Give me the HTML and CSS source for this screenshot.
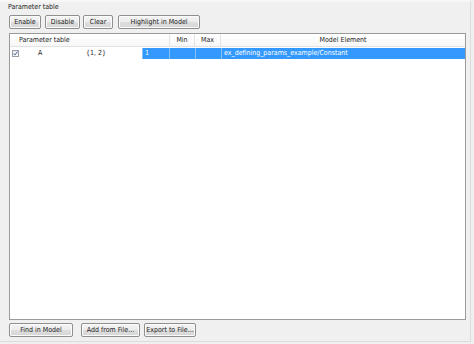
FILE: index.html
```html
<!DOCTYPE html>
<html>
<head>
<meta charset="utf-8">
<link rel="stylesheet" href="styles.css">
</head>
<body>
<div class="panel">
  <div class="title">Parameter table</div>
  <div class="toolbar">
    <button class="btn w-enable">Enable</button>
    <button class="btn w-disable">Disable</button>
    <button class="btn w-clear">Clear</button>
    <button class="btn w-highlight">Highlight in Model</button>
  </div>
  <div class="table">
    <div class="head">
      <div class="hcell h-param">Parameter table</div>
      <div class="hcell h-num">Min</div>
      <div class="hcell h-num">Max</div>
      <div class="hcell h-model">Model Element</div>
    </div>
    <div class="row">
      <div class="cell c-check"><span class="checkbox"><svg width="7" height="7" viewBox="0 0 7 7"><path d="M1.4 3.6 L2.8 5.1 L5.6 1.6" fill="none" stroke="#4a5a8a" stroke-width="1"/></svg></span></div>
      <div class="cell c-name">A</div>
      <div class="cell c-dim">{1, 2}</div>
      <div class="cell c-val sel">1</div>
      <div class="cell c-num sel"></div>
      <div class="cell c-num sel"></div>
      <div class="cell c-model sel">ex_defining_params_example/Constant</div>
    </div>
  </div>
  <div class="footer">
    <button class="btn w-find">Find in Model</button>
    <button class="btn w-add">Add from File...</button>
    <button class="btn w-export">Export to File...</button>
  </div>
</div>
</body>
</html>
```

FILE: styles.css
```css
html, body {
  margin: 0;
  padding: 0;
}
body {
  width: 474px;
  height: 344px;
  background: #f0f0f0;
  font-family: "DejaVu Sans Condensed", "DejaVu Sans", sans-serif;
  font-size: 7px;
  color: #222222;
  overflow: hidden;
}
.panel {
  box-sizing: border-box;
  width: 471px;
  height: 342px;
  border-top: 2px solid #f8f8f8;
  border-right: 1px solid #dcdcdc;
  border-bottom: 1px solid #dcdcdc;
  padding: 1px 0 0 9px;
  display: flex;
  flex-direction: column;
}
.title {
  height: 9px;
  line-height: 9px;
  margin-left: -1px;
}
.toolbar, .footer {
  display: flex;
  gap: 4px;
  margin-top: 3px;
}
.btn {
  box-sizing: border-box;
  height: 14px;
  padding: 0;
  margin: 0;
  font-family: inherit;
  font-size: 7px;
  color: #222222;
  border: 1px solid #8e8f8f;
  border-radius: 2px;
  background: linear-gradient(#f4f4f4 0%, #ececec 48%, #dedede 52%, #d6d6d6 100%);
  box-shadow: inset 0 0 0 1px #fcfcfc;
  line-height: 12px;
  text-align: center;
}
.w-enable { width: 32px; }
.w-disable { width: 35px; }
.w-clear { width: 30px; margin-left: -1px; }
.w-highlight { width: 82px; margin-left: 1px; }
.w-find { width: 64px; }
.w-add { width: 59px; margin-left: 4px; }
.w-export { width: 52px; }

.table {
  box-sizing: border-box;
  margin-top: 4px;
  width: 457px;
  height: 287px;
  border: 1px solid #9a9a9a;
  background: #ffffff;
}
.head {
  display: grid;
  grid-template-columns: 160px 25px 26px 1fr;
  height: 12px;
  border-bottom: 1px solid #e2e2e2;
  background: linear-gradient(#ffffff, #f7f7f7);
}
.hcell {
  line-height: 12px;
  border-right: 1px solid #e4e4e4;
  white-space: nowrap;
}
.h-param { padding-left: 9px; }
.h-num { text-align: center; }
.h-model { text-align: center; border-right: none; }

.row {
  display: grid;
  grid-template-columns: 20px 55px 57px 27px 26px 26px 1fr;
  height: 11px;
  margin-top: 1px;
}
.cell {
  line-height: 11px;
  white-space: nowrap;
  overflow: hidden;
}
.c-check {
  display: flex;
  align-items: center;
  padding-left: 2px;
}
.checkbox {
  display: block;
  box-sizing: border-box;
  width: 7px;
  height: 7px;
  border: 1px solid #9a9aaa;
  background: linear-gradient(#e4e9f0, #ffffff);
  position: relative;
}
.checkbox svg {
  position: absolute;
  left: -1px;
  top: -1px;
}
.c-name { padding-left: 8px; }
.c-dim { padding-left: 1px; }
.sel {
  background: #3399ff;
  color: #ffffff;
  border-left: 1px solid #85c0fb;
}
.c-val { padding-left: 2px; }
.c-model { padding-left: 2px; }
```
